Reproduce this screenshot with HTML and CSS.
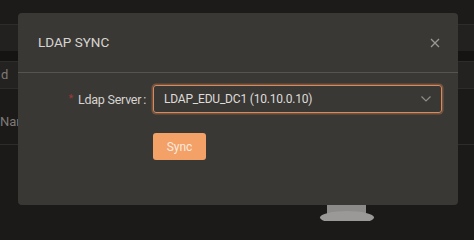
FILE: index.html
```html
<!DOCTYPE html>
<html>
<head>
<meta charset="utf-8">
<link rel="stylesheet" href="styles.css">
</head>
<body>
<div class="page">
  <div class="top"></div>
  <div class="row row-a"></div>
  <div class="band"></div>
  <div class="row row-b"><span class="cell-text clip-d">d</span></div>
  <div class="row row-c"><span class="cell-text">Name</span></div>
  <div class="rest"></div>
  <div class="blob">
    <div class="blob-top"></div>
    <div class="blob-base"></div>
  </div>
</div>

<div class="modal">
  <div class="modal-header">
    <span class="modal-title">LDAP SYNC</span>
    <svg class="close" width="10" height="10" viewBox="0 0 10 10"><path d="M1 1L9 9M9 1L1 9" stroke="#9a9894" stroke-width="1.3" fill="none"/></svg>
  </div>
  <div class="modal-body">
    <div class="form-row">
      <label class="label"><span class="req">*</span>Ldap Server<span class="colon">:</span></label>
      <div class="select">
        <span class="select-value">LDAP_EDU_DC1 (10.10.0.10)</span>
        <svg class="chev" width="12" height="8" viewBox="0 0 12 8"><path d="M1.5 1.5L6 6L10.5 1.5" stroke="#8f8c87" stroke-width="1.2" fill="none"/></svg>
      </div>
    </div>
    <div class="actions">
      <button class="btn">Sync</button>
    </div>
  </div>
</div>
</body>
</html>
```

FILE: styles.css
```css
html, body {
  margin: 0;
  padding: 0;
  width: 474px;
  height: 221px;
  overflow: hidden;
  background: #1b1a19;
  font-family: Roboto, "Liberation Sans", sans-serif;
}

.page {
  position: relative;
  width: 474px;
  height: 221px;
  display: flex;
  flex-direction: column;
}

.top {
  height: 24px;
  background: #1c1b1a;
}

.row {
  display: flex;
  align-items: center;
  border-top: 1px solid #2e2c2a;
  box-sizing: border-box;
}

.row-a {
  height: 27px;
  background: #222120;
}

.band {
  height: 10px;
  background: #151413;
}

.row-b {
  height: 27px;
  background: #232220;
}

.row-c {
  height: 57px;
  background: #1b1a19;
  border-bottom: 1px solid #2e2c2a;
  align-items: flex-start;
  padding-top: 25px;
}

.rest {
  flex: 1;
  background: #1b1a19;
}

.cell-text {
  color: #7e7b77;
  font-size: 13px;
  line-height: 16px;
}

.clip-d {
  margin-left: 1px;
}

.blob {
  position: absolute;
  left: 320px;
  top: 205px;
  width: 54px;
  height: 18px;
}

.blob-top {
  position: absolute;
  left: 7px;
  top: 0;
  width: 39px;
  height: 10px;
  background: #8c8b89;
}

.blob-base {
  position: absolute;
  left: 0;
  top: 6px;
  width: 54px;
  height: 13px;
  border-radius: 50%;
  background: #9a9997;
}

.modal {
  position: absolute;
  left: 18px;
  top: 13px;
  width: 440px;
  height: 192px;
  background: #3a3835;
  border-radius: 4px;
  box-sizing: border-box;
}

.modal-header {
  height: 60px;
  border-bottom: 1px solid #57544f;
  box-sizing: border-box;
  display: flex;
  align-items: center;
  justify-content: space-between;
  padding: 0 18px 0 20px;
}

.modal-title {
  color: #d6d4d0;
  font-size: 13.5px;
  margin-top: -1px;
}

.close {
  display: block;
}

.modal-body {
  padding: 12px 16px 0 0;
}

.form-row {
  display: flex;
  align-items: center;
  height: 28px;
}

.label {
  width: 135px;
  display: flex;
  justify-content: flex-end;
  align-items: center;
  color: #d6d4d0;
  font-size: 12.5px;
  letter-spacing: -0.25px;
  box-sizing: border-box;
  padding-right: 7px;
}

.req {
  color: #9b3b36;
  font-size: 11px;
  margin-right: 5px;
  margin-top: -2px;
}

.colon {
  margin-left: 2px;
}

.select {
  flex: 1;
  height: 28px;
  box-sizing: border-box;
  border: 1px solid #d9895a;
  border-radius: 3px;
  box-shadow: 0 0 0 1.5px rgba(217, 137, 90, 0.35);
  display: flex;
  align-items: center;
  justify-content: space-between;
  padding: 0 9px 0 10px;
}

.select-value {
  color: #dedcd8;
  font-size: 12px;
  letter-spacing: -0.2px;
}

.chev {
  display: block;
}

.actions {
  padding-left: 135px;
  margin-top: 20px;
}

.btn {
  width: 53px;
  height: 27px;
  border: none;
  border-radius: 3px;
  background: #f3a167;
  color: #fbeadf;
  font-family: Roboto, "Liberation Sans", sans-serif;
  font-size: 12px;
  padding: 0;
}
```
